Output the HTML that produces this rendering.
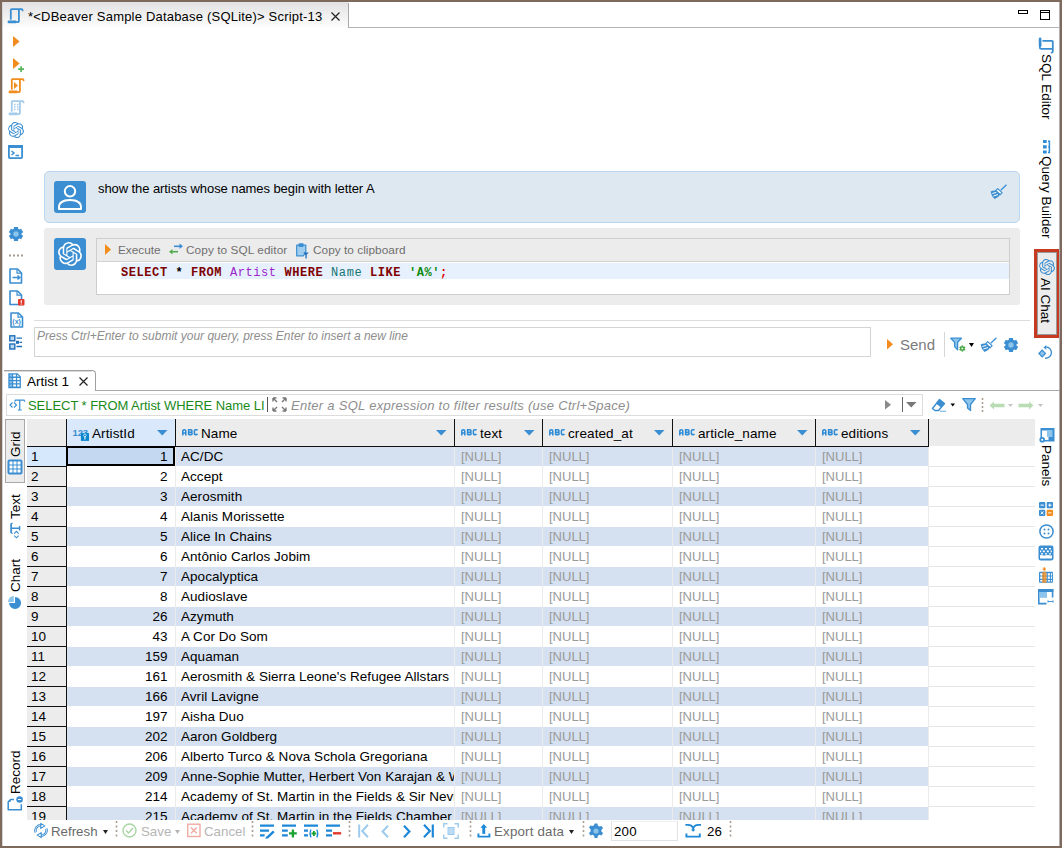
<!DOCTYPE html>
<html><head><meta charset="utf-8">
<style>
*{margin:0;padding:0;box-sizing:border-box}
html,body{width:1062px;height:848px;overflow:hidden;background:#fff;font-family:"Liberation Sans",sans-serif;font-size:13px;color:#000}
.a{position:absolute}
.t{position:absolute;white-space:nowrap;line-height:15px}
svg{position:absolute;overflow:visible}
</style></head><body>

<svg width="0" height="0" style="position:absolute"><defs>
<path id="oai" d="M22.2819 9.8211a5.9847 5.9847 0 0 0-.5157-4.9108 6.0462 6.0462 0 0 0-6.5098-2.9A6.0651 6.0651 0 0 0 4.9807 4.1818a5.9847 5.9847 0 0 0-3.9977 2.9 6.0462 6.0462 0 0 0 .7427 7.0966 5.98 5.98 0 0 0 .511 4.9107 6.051 6.051 0 0 0 6.5146 2.9001A5.9847 5.9847 0 0 0 13.2599 24a6.0557 6.0557 0 0 0 5.7718-4.2058 5.9894 5.9894 0 0 0 3.9977-2.9001 6.0557 6.0557 0 0 0-.7475-7.0729zm-9.022 12.6081a4.4755 4.4755 0 0 1-2.8764-1.0408l.1419-.0804 4.7783-2.7582a.7948.7948 0 0 0 .3927-.6813v-6.7369l2.02 1.1686a.071.071 0 0 1 .038.052v5.5826a4.504 4.504 0 0 1-4.4945 4.4944zm-9.6607-4.1254a4.4708 4.4708 0 0 1-.5346-3.0137l.142.0852 4.783 2.7582a.7712.7712 0 0 0 .7806 0l5.8428-3.3685v2.3324a.0804.0804 0 0 1-.0332.0615L9.74 19.9502a4.4992 4.4992 0 0 1-6.1408-1.6464zM2.3408 7.8956a4.485 4.485 0 0 1 2.3655-1.9728V11.6a.7664.7664 0 0 0 .3879.6765l5.8144 3.3543-2.0201 1.1685a.0757.0757 0 0 1-.071 0l-4.8303-2.7865A4.504 4.504 0 0 1 2.3408 7.872zm16.5963 3.8558L13.1038 8.364 15.1192 7.2a.0757.0757 0 0 1 .071 0l4.8303 2.7913a4.4944 4.4944 0 0 1-.6765 8.1042v-5.6772a.79.79 0 0 0-.407-.667zm2.0107-3.0231l-.142-.0852-4.7735-2.7818a.7759.7759 0 0 0-.7854 0L9.409 9.2297V6.8974a.0662.0662 0 0 1 .0284-.0615l4.8303-2.7866a4.4992 4.4992 0 0 1 6.6802 4.66zM8.3065 12.863l-2.02-1.1638a.0804.0804 0 0 1-.038-.0567V6.0742a4.4992 4.4992 0 0 1 7.3757-3.4537l-.142.0805L8.704 5.459a.7948.7948 0 0 0-.3927.6813zm1.0976-2.3654l2.602-1.4998 2.6069 1.4998v2.9994l-2.5974 1.4997-2.6067-1.4997Z"/>
<g id="scr"><path d="M3.8 11.9V3Q3.8 2.2 4.6 2.2H14.4Q15.6 2.2 15.6 3.4M11.9 2.2V13.4Q11.9 15.2 10.3 15.2Q9 15.2 8.3 14.6" fill="none" stroke-width="1.8" stroke-linecap="round"/><path d="M1.9 14.9H8.3" stroke-width="2.7" stroke-linecap="round"/></g>
</defs></svg>
<!-- ===== editor tab bar ===== -->
<div class="a" style="left:2px;top:2px;width:346px;height:26px;background:linear-gradient(#e2e2e2,#fdfdfd)"></div>
<div class="a" style="left:348px;top:3px;width:1px;height:25px;background:#a9a9a9"></div>
<div class="a" style="left:348px;top:27px;width:711px;height:1px;background:#b4b4b4"></div>
<div class="t" style="left:28px;top:9px;letter-spacing:0.2px">*&lt;DBeaver Sample Database (SQLite)&gt; Script-13</div>
<svg style="left:7px;top:7px" width="18" height="18"><use href="#scr" stroke="#3a8ed1"/></svg>
<svg style="left:331px;top:12px" width="9" height="9"><path d="M0.5 0.5L8.5 8.5M8.5 0.5L0.5 8.5" stroke="#222" stroke-width="1.2"/></svg>
<div class="a" style="left:1018px;top:10px;width:10px;height:4px;border:1px solid #000"></div>
<div class="a" style="left:1040px;top:10px;width:10px;height:10px;border:1px solid #000"></div>
<div class="a" style="left:1041px;top:12px;width:8px;height:1px;background:#000"></div>


<!-- ===== left editor toolbar ===== -->
<svg style="left:13px;top:36px" width="7" height="11"><path d="M0 0L6.6 5.5L0 11Z" fill="#f28c1c"/></svg>
<svg style="left:13px;top:58px" width="12" height="14"><path d="M0 0L6.6 5.5L0 11Z" fill="#f28c1c"/><path d="M5.2 11.1H11M8.1 8.3V13.9" stroke="#58b45a" stroke-width="1.7"/></svg>
<svg style="left:8px;top:77px" width="18" height="18"><use href="#scr" stroke="#f28c1c"/><path d="M6 5L9.9 8.5L6 12Z" fill="#f28c1c"/></svg>
<svg style="left:8px;top:99px" width="18" height="18" opacity="0.45"><use href="#scr" stroke="#3a8ed1"/><path d="M6 5.5H7.5M9 5.5H10.5M6 8H7.5M9 8H10.5M6 10.5H7.5M9 10.5H10.5" stroke="#3a8ed1" stroke-width="1.3"/></svg>
<svg style="left:8px;top:122px" width="16" height="16" viewBox="0 0 24 24"><use href="#oai" fill="#3a8ed1"/></svg>
<svg style="left:8px;top:145px" width="15" height="14"><rect x="0.9" y="0.9" width="13.2" height="12.2" rx="1" fill="none" stroke="#3a8ed1" stroke-width="1.8"/><rect x="0" y="0" width="15" height="3" fill="#3a8ed1"/><path d="M3.5 6L6 8L3.5 10" stroke="#3a8ed1" stroke-width="1.5" fill="none"/><path d="M7.5 10.5H11" stroke="#3a8ed1" stroke-width="1.5"/></svg>
<svg style="left:8px;top:226px" width="16" height="16" viewBox="0 0 16 16"><path d="M5.98 0.88 L10.02 0.88 L10.17 2.84 L11.39 3.54 L13.16 2.69 L15.18 6.19 L13.56 7.30 L13.56 8.70 L15.18 9.81 L13.16 13.31 L11.39 12.46 L10.17 13.16 L10.02 15.12 L5.98 15.12 L5.83 13.16 L4.61 12.46 L2.84 13.31 L0.82 9.81 L2.44 8.70 L2.44 7.30 L0.82 6.19 L2.84 2.69 L4.61 3.54 L5.83 2.84Z" fill="#3a8ed1"/><circle cx="8" cy="8" r="2.7" fill="#8cc4ec"/></svg>
<svg style="left:9px;top:254px" width="15" height="3"><path d="M0 1.5H2M4 1.5H6M8 1.5H10M12 1.5H14" stroke="#a99c8c" stroke-width="2"/></svg>
<svg style="left:9px;top:268px" width="14" height="16"><path d="M1 1H8.5L12.5 5V15H1Z" fill="none" stroke="#3a8ed1" stroke-width="1.6" stroke-linejoin="round"/><path d="M8 1.2V5.2H12" fill="none" stroke="#3a8ed1" stroke-width="1.2"/><path d="M3.5 9.5H10.5M8.5 7.5L10.8 9.5L8.5 11.5" stroke="#3a8ed1" stroke-width="1.5" fill="none"/></svg>
<svg style="left:9px;top:290px" width="16" height="16"><path d="M1 1H8.5L12.5 5V14.5H1Z" fill="none" stroke="#3a8ed1" stroke-width="1.6" stroke-linejoin="round"/><path d="M8 1.2V5.2H12" fill="none" stroke="#3a8ed1" stroke-width="1.2"/><rect x="9" y="9" width="6.5" height="6.5" rx="1" fill="#e03a2c"/><path d="M12.25 10.3V12.8M12.25 13.6V14.4" stroke="#fff" stroke-width="1.2"/></svg>
<svg style="left:10px;top:312px" width="14" height="16"><path d="M1 1H8.5L12.5 5V15H1Z" fill="none" stroke="#3a8ed1" stroke-width="1.6" stroke-linejoin="round"/><path d="M8 1.2V5.2H12" fill="none" stroke="#3a8ed1" stroke-width="1.2"/><text x="6.6" y="12" font-size="7" font-weight="bold" text-anchor="middle" fill="#3a8ed1" font-family="Liberation Sans">(x)</text></svg>
<svg style="left:9px;top:335px" width="14" height="15"><rect x="0.8" y="0.8" width="5" height="5" fill="#bcdaf5" stroke="#1e6fb8" stroke-width="1.4"/><rect x="0.8" y="9" width="5" height="5" fill="#bcdaf5" stroke="#1e6fb8" stroke-width="1.4"/><path d="M7.5 3.2H13M7.5 11.5H13M10.5 7.3H13" stroke="#1e6fb8" stroke-width="1.3"/><rect x="7.5" y="6.3" width="2" height="2" fill="none" stroke="#1e6fb8" stroke-width="1"/></svg>

<!-- ===== chat ===== -->
<div class="a" style="left:44px;top:171px;width:976px;height:52px;background:#dee8f1;border:1px solid #b8d6ef;border-radius:5px"></div>
<div class="a" style="left:54px;top:181px;width:32px;height:32px;background:#3a8ed1;border-radius:3px"></div>
<svg style="left:54px;top:181px" width="32" height="32"><circle cx="16" cy="10.3" r="5.2" fill="none" stroke="#fff" stroke-width="2"/><path d="M5 28V26.5Q5 19 16 19Q27 19 27 26.5V28Z" fill="none" stroke="#fff" stroke-width="2" stroke-linejoin="round"/></svg>
<div class="t" style="left:98px;top:181px;letter-spacing:-0.08px">show the artists whose names begin with letter A</div>
<svg style="left:990px;top:184px" width="17" height="16"><path d="M16.2 1.1L11 5.9" stroke="#3a8ed1" stroke-width="1.3" stroke-linecap="round"/><path d="M7.6 4.6L12.1 8.6L10.3 10.6L5.8 6.6Z" fill="#fff" stroke="#3a8ed1" stroke-width="1.2" stroke-linejoin="round"/><path d="M5.8 6.6Q2.5 6.3 0.6 7.6Q1.4 12.5 4.5 15.1Q8.6 13.6 10.3 10.6Z" fill="#3a8ed1"/><path d="M2.3 9.4L6.3 8.5M3.3 12L8 10.6" stroke="#fff" stroke-width="1"/></svg>

<div class="a" style="left:44px;top:228px;width:976px;height:77px;background:#ececec;border-radius:3px"></div>
<div class="a" style="left:54px;top:238px;width:32px;height:32px;background:#3a8ed1;border-radius:3px"></div>
<svg style="left:58px;top:242px" width="24" height="24" viewBox="0 0 24 24"><use href="#oai" fill="#fff"/></svg>
<div class="a" style="left:96px;top:238px;width:914px;height:57px;background:#fff;border:1px solid #cdcdcd"></div>
<div class="a" style="left:97px;top:239px;width:912px;height:23px;background:#ececec;border-bottom:1px solid #d2d2d2"></div>
<div class="a" style="left:121px;top:263px;width:888px;height:16px;background:#e7f1fd"></div>
<svg style="left:105px;top:244px" width="7" height="11"><path d="M0 0L6 5.5L0 11Z" fill="#f28c1c"/></svg>
<div class="t" style="left:118px;top:243px;font-size:11.8px;color:#6f6f6f;letter-spacing:0px">Execute</div>
<svg style="left:168px;top:243px" width="16" height="12"><path d="M6 3.3H12" stroke="#3a8ed1" stroke-width="1.6"/><path d="M11.5 0.5L15 3.3L11.5 6.1Z" fill="#3a8ed1"/><path d="M4 8.7H10" stroke="#50ad4f" stroke-width="1.6"/><path d="M4.5 5.9L1 8.7L4.5 11.5Z" fill="#50ad4f"/></svg>
<div class="t" style="left:186px;top:243px;font-size:11.8px;color:#6f6f6f;letter-spacing:0.08px">Copy to SQL editor</div>
<svg style="left:296px;top:243px" width="13" height="16"><path d="M0.7 2.2H9.8V8.5L7.5 12.8H0.7Z" fill="#9fcdf0" stroke="#3a8ed1" stroke-width="1.2" stroke-linejoin="round"/><rect x="2.6" y="0.3" width="5" height="3.6" rx="0.8" fill="#3a8ed1"/><path d="M7.3 9.6H12.8L10.05 12.6Z" fill="#1e6fb8"/><path d="M10.05 12V15.5" stroke="#1e6fb8" stroke-width="1.3"/></svg>
<div class="t" style="left:313px;top:243px;font-size:11.8px;color:#6f6f6f;letter-spacing:0.04px">Copy to clipboard</div>
<div class="t" style="left:121px;top:266px;font-family:'Liberation Mono',monospace;font-size:12px;letter-spacing:0.58px;font-weight:bold;color:#7f0000"><span>SELECT</span> <span style="color:#000">*</span> <span>FROM</span> <span style="font-weight:normal;color:#9b27c9">Artist</span> <span>WHERE</span> <span style="font-weight:normal;color:#167575">Name</span> <span>LIKE</span> <span style="color:#0b8a0b">'A%'</span><span style="color:#e00000">;</span></div>

<!-- ===== input ===== -->
<div class="a" style="left:34px;top:320px;width:996px;height:1px;background:#dcdcdc"></div>
<div class="a" style="left:34px;top:327px;width:837px;height:30px;border:1px solid #d4d4d4;background:#fff"></div>
<div class="t" style="left:37px;top:329px;font-size:12px;font-style:italic;color:#8e8e8e;letter-spacing:0px">Press Ctrl+Enter to submit your query, press Enter to insert a new line</div>
<svg style="left:887px;top:339px" width="7" height="11"><path d="M0 0L6 5.25L0 10.5Z" fill="#f28c1c"/></svg>
<div class="t" style="left:900px;top:336px;font-size:15px;line-height:17px;color:#7b7b7b">Send</div>
<div class="a" style="left:944px;top:332px;width:1px;height:25px;background:#d6d6d6"></div>
<svg style="left:950px;top:337px" width="24" height="16"><path d="M0.8 1.2H11.4L7.6 5.3V12.8L4.6 9.6V5.3Z" fill="#8cc4ec" stroke="#3a8ed1" stroke-width="1.3" stroke-linejoin="round"/><path d="M11.43 8.42 L13.17 8.42 L13.19 9.38 L13.69 9.67 L14.53 9.20 L15.40 10.72 L14.58 11.21 L14.58 11.79 L15.40 12.28 L14.53 13.80 L13.69 13.33 L13.19 13.62 L13.17 14.58 L11.43 14.58 L11.41 13.62 L10.91 13.33 L10.07 13.80 L9.20 12.28 L10.02 11.79 L10.02 11.21 L9.20 10.72 L10.07 9.20 L10.91 9.67 L11.41 9.38Z" fill="#3fa33c"/><circle cx="12.3" cy="11.5" r="1" fill="#fff"/><path d="M19 6H24L21.5 10Z" fill="#000"/></svg>
<svg style="left:980px;top:337px" width="17" height="16"><path d="M16.2 1.1L11 5.9" stroke="#3a8ed1" stroke-width="1.3" stroke-linecap="round"/><path d="M7.6 4.6L12.1 8.6L10.3 10.6L5.8 6.6Z" fill="#fff" stroke="#3a8ed1" stroke-width="1.2" stroke-linejoin="round"/><path d="M5.8 6.6Q2.5 6.3 0.6 7.6Q1.4 12.5 4.5 15.1Q8.6 13.6 10.3 10.6Z" fill="#3a8ed1"/><path d="M2.3 9.4L6.3 8.5M3.3 12L8 10.6" stroke="#fff" stroke-width="1"/></svg>
<svg style="left:1003px;top:337px" width="16" height="16" viewBox="0 0 16 16"><path d="M5.98 0.88 L10.02 0.88 L10.17 2.84 L11.39 3.54 L13.16 2.69 L15.18 6.19 L13.56 7.30 L13.56 8.70 L15.18 9.81 L13.16 13.31 L11.39 12.46 L10.17 13.16 L10.02 15.12 L5.98 15.12 L5.83 13.16 L4.61 12.46 L2.84 13.31 L0.82 9.81 L2.44 8.70 L2.44 7.30 L0.82 6.19 L2.84 2.69 L4.61 3.54 L5.83 2.84Z" fill="#3a8ed1"/><circle cx="8" cy="8" r="2.7" fill="#8cc4ec"/></svg>

<!-- ===== results ===== -->
<div class="a" style="left:0;top:419px;width:1059px;height:401px;overflow:hidden">
<div class="a" style="left:27px;top:0;width:1008px;height:27px;background:#ececec"></div>
<div class="a" style="left:67px;top:0;width:108px;height:27px;background:#d9e9fb"></div>
<div class="a" style="left:67px;top:28px;width:861px;height:19px;background:#d5e1f0"></div>
<div class="a" style="left:27px;top:28px;width:39px;height:20px;background:#d6e8fb"></div>
<div class="a" style="left:27px;top:47px;width:39px;height:1px;background:#111"></div>
<div class="a" style="left:928px;top:47px;width:107px;height:1px;background:#e6e6e6"></div>
<div class="a" style="left:67px;top:48px;width:861px;height:19px;background:#ffffff"></div>
<div class="a" style="left:27px;top:48px;width:39px;height:20px;background:#ececec"></div>
<div class="a" style="left:27px;top:67px;width:39px;height:1px;background:#111"></div>
<div class="a" style="left:928px;top:67px;width:107px;height:1px;background:#e6e6e6"></div>
<div class="a" style="left:67px;top:68px;width:861px;height:19px;background:#d5e1f0"></div>
<div class="a" style="left:27px;top:68px;width:39px;height:20px;background:#ececec"></div>
<div class="a" style="left:27px;top:87px;width:39px;height:1px;background:#111"></div>
<div class="a" style="left:928px;top:87px;width:107px;height:1px;background:#e6e6e6"></div>
<div class="a" style="left:67px;top:88px;width:861px;height:19px;background:#ffffff"></div>
<div class="a" style="left:27px;top:88px;width:39px;height:20px;background:#ececec"></div>
<div class="a" style="left:27px;top:107px;width:39px;height:1px;background:#111"></div>
<div class="a" style="left:928px;top:107px;width:107px;height:1px;background:#e6e6e6"></div>
<div class="a" style="left:67px;top:108px;width:861px;height:19px;background:#d5e1f0"></div>
<div class="a" style="left:27px;top:108px;width:39px;height:20px;background:#ececec"></div>
<div class="a" style="left:27px;top:127px;width:39px;height:1px;background:#111"></div>
<div class="a" style="left:928px;top:127px;width:107px;height:1px;background:#e6e6e6"></div>
<div class="a" style="left:67px;top:128px;width:861px;height:19px;background:#ffffff"></div>
<div class="a" style="left:27px;top:128px;width:39px;height:20px;background:#ececec"></div>
<div class="a" style="left:27px;top:147px;width:39px;height:1px;background:#111"></div>
<div class="a" style="left:928px;top:147px;width:107px;height:1px;background:#e6e6e6"></div>
<div class="a" style="left:67px;top:148px;width:861px;height:19px;background:#d5e1f0"></div>
<div class="a" style="left:27px;top:148px;width:39px;height:20px;background:#ececec"></div>
<div class="a" style="left:27px;top:167px;width:39px;height:1px;background:#111"></div>
<div class="a" style="left:928px;top:167px;width:107px;height:1px;background:#e6e6e6"></div>
<div class="a" style="left:67px;top:168px;width:861px;height:19px;background:#ffffff"></div>
<div class="a" style="left:27px;top:168px;width:39px;height:20px;background:#ececec"></div>
<div class="a" style="left:27px;top:187px;width:39px;height:1px;background:#111"></div>
<div class="a" style="left:928px;top:187px;width:107px;height:1px;background:#e6e6e6"></div>
<div class="a" style="left:67px;top:188px;width:861px;height:19px;background:#d5e1f0"></div>
<div class="a" style="left:27px;top:188px;width:39px;height:20px;background:#ececec"></div>
<div class="a" style="left:27px;top:207px;width:39px;height:1px;background:#111"></div>
<div class="a" style="left:928px;top:207px;width:107px;height:1px;background:#e6e6e6"></div>
<div class="a" style="left:67px;top:208px;width:861px;height:19px;background:#ffffff"></div>
<div class="a" style="left:27px;top:208px;width:39px;height:20px;background:#ececec"></div>
<div class="a" style="left:27px;top:227px;width:39px;height:1px;background:#111"></div>
<div class="a" style="left:928px;top:227px;width:107px;height:1px;background:#e6e6e6"></div>
<div class="a" style="left:67px;top:228px;width:861px;height:19px;background:#d5e1f0"></div>
<div class="a" style="left:27px;top:228px;width:39px;height:20px;background:#ececec"></div>
<div class="a" style="left:27px;top:247px;width:39px;height:1px;background:#111"></div>
<div class="a" style="left:928px;top:247px;width:107px;height:1px;background:#e6e6e6"></div>
<div class="a" style="left:67px;top:248px;width:861px;height:19px;background:#ffffff"></div>
<div class="a" style="left:27px;top:248px;width:39px;height:20px;background:#ececec"></div>
<div class="a" style="left:27px;top:267px;width:39px;height:1px;background:#111"></div>
<div class="a" style="left:928px;top:267px;width:107px;height:1px;background:#e6e6e6"></div>
<div class="a" style="left:67px;top:268px;width:861px;height:19px;background:#d5e1f0"></div>
<div class="a" style="left:27px;top:268px;width:39px;height:20px;background:#ececec"></div>
<div class="a" style="left:27px;top:287px;width:39px;height:1px;background:#111"></div>
<div class="a" style="left:928px;top:287px;width:107px;height:1px;background:#e6e6e6"></div>
<div class="a" style="left:67px;top:288px;width:861px;height:19px;background:#ffffff"></div>
<div class="a" style="left:27px;top:288px;width:39px;height:20px;background:#ececec"></div>
<div class="a" style="left:27px;top:307px;width:39px;height:1px;background:#111"></div>
<div class="a" style="left:928px;top:307px;width:107px;height:1px;background:#e6e6e6"></div>
<div class="a" style="left:67px;top:308px;width:861px;height:19px;background:#d5e1f0"></div>
<div class="a" style="left:27px;top:308px;width:39px;height:20px;background:#ececec"></div>
<div class="a" style="left:27px;top:327px;width:39px;height:1px;background:#111"></div>
<div class="a" style="left:928px;top:327px;width:107px;height:1px;background:#e6e6e6"></div>
<div class="a" style="left:67px;top:328px;width:861px;height:19px;background:#ffffff"></div>
<div class="a" style="left:27px;top:328px;width:39px;height:20px;background:#ececec"></div>
<div class="a" style="left:27px;top:347px;width:39px;height:1px;background:#111"></div>
<div class="a" style="left:928px;top:347px;width:107px;height:1px;background:#e6e6e6"></div>
<div class="a" style="left:67px;top:348px;width:861px;height:19px;background:#d5e1f0"></div>
<div class="a" style="left:27px;top:348px;width:39px;height:20px;background:#ececec"></div>
<div class="a" style="left:27px;top:367px;width:39px;height:1px;background:#111"></div>
<div class="a" style="left:928px;top:367px;width:107px;height:1px;background:#e6e6e6"></div>
<div class="a" style="left:67px;top:368px;width:861px;height:19px;background:#ffffff"></div>
<div class="a" style="left:27px;top:368px;width:39px;height:20px;background:#ececec"></div>
<div class="a" style="left:27px;top:387px;width:39px;height:1px;background:#111"></div>
<div class="a" style="left:928px;top:387px;width:107px;height:1px;background:#e6e6e6"></div>
<div class="a" style="left:67px;top:388px;width:861px;height:19px;background:#d5e1f0"></div>
<div class="a" style="left:27px;top:388px;width:39px;height:20px;background:#ececec"></div>
<div class="a" style="left:27px;top:407px;width:39px;height:1px;background:#111"></div>
<div class="a" style="left:928px;top:407px;width:107px;height:1px;background:#e6e6e6"></div>
<div class="a" style="left:175px;top:28px;width:1px;height:380px;background:#ebebeb"></div>
<div class="a" style="left:454px;top:28px;width:1px;height:380px;background:#ebebeb"></div>
<div class="a" style="left:542px;top:28px;width:1px;height:380px;background:#ebebeb"></div>
<div class="a" style="left:672px;top:28px;width:1px;height:380px;background:#ebebeb"></div>
<div class="a" style="left:815px;top:28px;width:1px;height:380px;background:#ebebeb"></div>
<div class="a" style="left:928px;top:28px;width:1px;height:380px;background:#ebebeb"></div>
<div class="a" style="left:66px;top:0;width:1px;height:28px;background:#111"></div>
<div class="a" style="left:175px;top:0;width:1px;height:28px;background:#111"></div>
<div class="a" style="left:454px;top:0;width:1px;height:28px;background:#111"></div>
<div class="a" style="left:542px;top:0;width:1px;height:28px;background:#111"></div>
<div class="a" style="left:672px;top:0;width:1px;height:28px;background:#111"></div>
<div class="a" style="left:815px;top:0;width:1px;height:28px;background:#111"></div>
<div class="a" style="left:928px;top:0;width:1px;height:28px;background:#111"></div>
<div class="a" style="left:27px;top:27px;width:902px;height:1px;background:#111"></div>
<div class="a" style="left:66px;top:0;width:1px;height:401px;background:#111"></div>
<div class="a" style="left:66px;top:27px;width:109px;height:20px;border:2px solid #000;background:#c4d9f1"></div>
<div class="t" style="left:31px;top:30px;font-size:13.5px">1</div>
<div class="t" style="left:100px;width:67.5px;text-align:right;top:30px;font-size:13.5px">1</div>
<div class="t" style="left:181px;width:273px;overflow:hidden;top:30px;font-size:13.5px;letter-spacing:0.05px">AC/DC</div>
<div class="t" style="left:461px;top:30px;font-size:13px;color:#9a9a9a">[NULL]</div>
<div class="t" style="left:549px;top:30px;font-size:13px;color:#9a9a9a">[NULL]</div>
<div class="t" style="left:679px;top:30px;font-size:13px;color:#9a9a9a">[NULL]</div>
<div class="t" style="left:822px;top:30px;font-size:13px;color:#9a9a9a">[NULL]</div>
<div class="t" style="left:31px;top:50px;font-size:13.5px">2</div>
<div class="t" style="left:100px;width:67.5px;text-align:right;top:50px;font-size:13.5px">2</div>
<div class="t" style="left:181px;width:273px;overflow:hidden;top:50px;font-size:13.5px;letter-spacing:0.05px">Accept</div>
<div class="t" style="left:461px;top:50px;font-size:13px;color:#9a9a9a">[NULL]</div>
<div class="t" style="left:549px;top:50px;font-size:13px;color:#9a9a9a">[NULL]</div>
<div class="t" style="left:679px;top:50px;font-size:13px;color:#9a9a9a">[NULL]</div>
<div class="t" style="left:822px;top:50px;font-size:13px;color:#9a9a9a">[NULL]</div>
<div class="t" style="left:31px;top:70px;font-size:13.5px">3</div>
<div class="t" style="left:100px;width:67.5px;text-align:right;top:70px;font-size:13.5px">3</div>
<div class="t" style="left:181px;width:273px;overflow:hidden;top:70px;font-size:13.5px;letter-spacing:0.05px">Aerosmith</div>
<div class="t" style="left:461px;top:70px;font-size:13px;color:#9a9a9a">[NULL]</div>
<div class="t" style="left:549px;top:70px;font-size:13px;color:#9a9a9a">[NULL]</div>
<div class="t" style="left:679px;top:70px;font-size:13px;color:#9a9a9a">[NULL]</div>
<div class="t" style="left:822px;top:70px;font-size:13px;color:#9a9a9a">[NULL]</div>
<div class="t" style="left:31px;top:90px;font-size:13.5px">4</div>
<div class="t" style="left:100px;width:67.5px;text-align:right;top:90px;font-size:13.5px">4</div>
<div class="t" style="left:181px;width:273px;overflow:hidden;top:90px;font-size:13.5px;letter-spacing:0.05px">Alanis Morissette</div>
<div class="t" style="left:461px;top:90px;font-size:13px;color:#9a9a9a">[NULL]</div>
<div class="t" style="left:549px;top:90px;font-size:13px;color:#9a9a9a">[NULL]</div>
<div class="t" style="left:679px;top:90px;font-size:13px;color:#9a9a9a">[NULL]</div>
<div class="t" style="left:822px;top:90px;font-size:13px;color:#9a9a9a">[NULL]</div>
<div class="t" style="left:31px;top:110px;font-size:13.5px">5</div>
<div class="t" style="left:100px;width:67.5px;text-align:right;top:110px;font-size:13.5px">5</div>
<div class="t" style="left:181px;width:273px;overflow:hidden;top:110px;font-size:13.5px;letter-spacing:0.05px">Alice In Chains</div>
<div class="t" style="left:461px;top:110px;font-size:13px;color:#9a9a9a">[NULL]</div>
<div class="t" style="left:549px;top:110px;font-size:13px;color:#9a9a9a">[NULL]</div>
<div class="t" style="left:679px;top:110px;font-size:13px;color:#9a9a9a">[NULL]</div>
<div class="t" style="left:822px;top:110px;font-size:13px;color:#9a9a9a">[NULL]</div>
<div class="t" style="left:31px;top:130px;font-size:13.5px">6</div>
<div class="t" style="left:100px;width:67.5px;text-align:right;top:130px;font-size:13.5px">6</div>
<div class="t" style="left:181px;width:273px;overflow:hidden;top:130px;font-size:13.5px;letter-spacing:0.05px">Antônio Carlos Jobim</div>
<div class="t" style="left:461px;top:130px;font-size:13px;color:#9a9a9a">[NULL]</div>
<div class="t" style="left:549px;top:130px;font-size:13px;color:#9a9a9a">[NULL]</div>
<div class="t" style="left:679px;top:130px;font-size:13px;color:#9a9a9a">[NULL]</div>
<div class="t" style="left:822px;top:130px;font-size:13px;color:#9a9a9a">[NULL]</div>
<div class="t" style="left:31px;top:150px;font-size:13.5px">7</div>
<div class="t" style="left:100px;width:67.5px;text-align:right;top:150px;font-size:13.5px">7</div>
<div class="t" style="left:181px;width:273px;overflow:hidden;top:150px;font-size:13.5px;letter-spacing:0.05px">Apocalyptica</div>
<div class="t" style="left:461px;top:150px;font-size:13px;color:#9a9a9a">[NULL]</div>
<div class="t" style="left:549px;top:150px;font-size:13px;color:#9a9a9a">[NULL]</div>
<div class="t" style="left:679px;top:150px;font-size:13px;color:#9a9a9a">[NULL]</div>
<div class="t" style="left:822px;top:150px;font-size:13px;color:#9a9a9a">[NULL]</div>
<div class="t" style="left:31px;top:170px;font-size:13.5px">8</div>
<div class="t" style="left:100px;width:67.5px;text-align:right;top:170px;font-size:13.5px">8</div>
<div class="t" style="left:181px;width:273px;overflow:hidden;top:170px;font-size:13.5px;letter-spacing:0.05px">Audioslave</div>
<div class="t" style="left:461px;top:170px;font-size:13px;color:#9a9a9a">[NULL]</div>
<div class="t" style="left:549px;top:170px;font-size:13px;color:#9a9a9a">[NULL]</div>
<div class="t" style="left:679px;top:170px;font-size:13px;color:#9a9a9a">[NULL]</div>
<div class="t" style="left:822px;top:170px;font-size:13px;color:#9a9a9a">[NULL]</div>
<div class="t" style="left:31px;top:190px;font-size:13.5px">9</div>
<div class="t" style="left:100px;width:67.5px;text-align:right;top:190px;font-size:13.5px">26</div>
<div class="t" style="left:181px;width:273px;overflow:hidden;top:190px;font-size:13.5px;letter-spacing:0.05px">Azymuth</div>
<div class="t" style="left:461px;top:190px;font-size:13px;color:#9a9a9a">[NULL]</div>
<div class="t" style="left:549px;top:190px;font-size:13px;color:#9a9a9a">[NULL]</div>
<div class="t" style="left:679px;top:190px;font-size:13px;color:#9a9a9a">[NULL]</div>
<div class="t" style="left:822px;top:190px;font-size:13px;color:#9a9a9a">[NULL]</div>
<div class="t" style="left:31px;top:210px;font-size:13.5px">10</div>
<div class="t" style="left:100px;width:67.5px;text-align:right;top:210px;font-size:13.5px">43</div>
<div class="t" style="left:181px;width:273px;overflow:hidden;top:210px;font-size:13.5px;letter-spacing:0.05px">A Cor Do Som</div>
<div class="t" style="left:461px;top:210px;font-size:13px;color:#9a9a9a">[NULL]</div>
<div class="t" style="left:549px;top:210px;font-size:13px;color:#9a9a9a">[NULL]</div>
<div class="t" style="left:679px;top:210px;font-size:13px;color:#9a9a9a">[NULL]</div>
<div class="t" style="left:822px;top:210px;font-size:13px;color:#9a9a9a">[NULL]</div>
<div class="t" style="left:31px;top:230px;font-size:13.5px">11</div>
<div class="t" style="left:100px;width:67.5px;text-align:right;top:230px;font-size:13.5px">159</div>
<div class="t" style="left:181px;width:273px;overflow:hidden;top:230px;font-size:13.5px;letter-spacing:0.05px">Aquaman</div>
<div class="t" style="left:461px;top:230px;font-size:13px;color:#9a9a9a">[NULL]</div>
<div class="t" style="left:549px;top:230px;font-size:13px;color:#9a9a9a">[NULL]</div>
<div class="t" style="left:679px;top:230px;font-size:13px;color:#9a9a9a">[NULL]</div>
<div class="t" style="left:822px;top:230px;font-size:13px;color:#9a9a9a">[NULL]</div>
<div class="t" style="left:31px;top:250px;font-size:13.5px">12</div>
<div class="t" style="left:100px;width:67.5px;text-align:right;top:250px;font-size:13.5px">161</div>
<div class="t" style="left:181px;width:273px;overflow:hidden;top:250px;font-size:13.5px;letter-spacing:0.05px">Aerosmith &amp; Sierra Leone's Refugee Allstars</div>
<div class="t" style="left:461px;top:250px;font-size:13px;color:#9a9a9a">[NULL]</div>
<div class="t" style="left:549px;top:250px;font-size:13px;color:#9a9a9a">[NULL]</div>
<div class="t" style="left:679px;top:250px;font-size:13px;color:#9a9a9a">[NULL]</div>
<div class="t" style="left:822px;top:250px;font-size:13px;color:#9a9a9a">[NULL]</div>
<div class="t" style="left:31px;top:270px;font-size:13.5px">13</div>
<div class="t" style="left:100px;width:67.5px;text-align:right;top:270px;font-size:13.5px">166</div>
<div class="t" style="left:181px;width:273px;overflow:hidden;top:270px;font-size:13.5px;letter-spacing:0.05px">Avril Lavigne</div>
<div class="t" style="left:461px;top:270px;font-size:13px;color:#9a9a9a">[NULL]</div>
<div class="t" style="left:549px;top:270px;font-size:13px;color:#9a9a9a">[NULL]</div>
<div class="t" style="left:679px;top:270px;font-size:13px;color:#9a9a9a">[NULL]</div>
<div class="t" style="left:822px;top:270px;font-size:13px;color:#9a9a9a">[NULL]</div>
<div class="t" style="left:31px;top:290px;font-size:13.5px">14</div>
<div class="t" style="left:100px;width:67.5px;text-align:right;top:290px;font-size:13.5px">197</div>
<div class="t" style="left:181px;width:273px;overflow:hidden;top:290px;font-size:13.5px;letter-spacing:0.05px">Aisha Duo</div>
<div class="t" style="left:461px;top:290px;font-size:13px;color:#9a9a9a">[NULL]</div>
<div class="t" style="left:549px;top:290px;font-size:13px;color:#9a9a9a">[NULL]</div>
<div class="t" style="left:679px;top:290px;font-size:13px;color:#9a9a9a">[NULL]</div>
<div class="t" style="left:822px;top:290px;font-size:13px;color:#9a9a9a">[NULL]</div>
<div class="t" style="left:31px;top:310px;font-size:13.5px">15</div>
<div class="t" style="left:100px;width:67.5px;text-align:right;top:310px;font-size:13.5px">202</div>
<div class="t" style="left:181px;width:273px;overflow:hidden;top:310px;font-size:13.5px;letter-spacing:0.05px">Aaron Goldberg</div>
<div class="t" style="left:461px;top:310px;font-size:13px;color:#9a9a9a">[NULL]</div>
<div class="t" style="left:549px;top:310px;font-size:13px;color:#9a9a9a">[NULL]</div>
<div class="t" style="left:679px;top:310px;font-size:13px;color:#9a9a9a">[NULL]</div>
<div class="t" style="left:822px;top:310px;font-size:13px;color:#9a9a9a">[NULL]</div>
<div class="t" style="left:31px;top:330px;font-size:13.5px">16</div>
<div class="t" style="left:100px;width:67.5px;text-align:right;top:330px;font-size:13.5px">206</div>
<div class="t" style="left:181px;width:273px;overflow:hidden;top:330px;font-size:13.5px;letter-spacing:0.05px">Alberto Turco &amp; Nova Schola Gregoriana</div>
<div class="t" style="left:461px;top:330px;font-size:13px;color:#9a9a9a">[NULL]</div>
<div class="t" style="left:549px;top:330px;font-size:13px;color:#9a9a9a">[NULL]</div>
<div class="t" style="left:679px;top:330px;font-size:13px;color:#9a9a9a">[NULL]</div>
<div class="t" style="left:822px;top:330px;font-size:13px;color:#9a9a9a">[NULL]</div>
<div class="t" style="left:31px;top:350px;font-size:13.5px">17</div>
<div class="t" style="left:100px;width:67.5px;text-align:right;top:350px;font-size:13.5px">209</div>
<div class="t" style="left:181px;width:273px;overflow:hidden;top:350px;font-size:13.5px;letter-spacing:0.05px">Anne-Sophie Mutter, Herbert Von Karajan &amp; Wiener Philharmoniker</div>
<div class="t" style="left:461px;top:350px;font-size:13px;color:#9a9a9a">[NULL]</div>
<div class="t" style="left:549px;top:350px;font-size:13px;color:#9a9a9a">[NULL]</div>
<div class="t" style="left:679px;top:350px;font-size:13px;color:#9a9a9a">[NULL]</div>
<div class="t" style="left:822px;top:350px;font-size:13px;color:#9a9a9a">[NULL]</div>
<div class="t" style="left:31px;top:370px;font-size:13.5px">18</div>
<div class="t" style="left:100px;width:67.5px;text-align:right;top:370px;font-size:13.5px">214</div>
<div class="t" style="left:181px;width:273px;overflow:hidden;top:370px;font-size:13.5px;letter-spacing:0.05px">Academy of St. Martin in the Fields &amp; Sir Neville Marriner</div>
<div class="t" style="left:461px;top:370px;font-size:13px;color:#9a9a9a">[NULL]</div>
<div class="t" style="left:549px;top:370px;font-size:13px;color:#9a9a9a">[NULL]</div>
<div class="t" style="left:679px;top:370px;font-size:13px;color:#9a9a9a">[NULL]</div>
<div class="t" style="left:822px;top:370px;font-size:13px;color:#9a9a9a">[NULL]</div>
<div class="t" style="left:31px;top:390px;font-size:13.5px">19</div>
<div class="t" style="left:100px;width:67.5px;text-align:right;top:390px;font-size:13.5px">215</div>
<div class="t" style="left:181px;width:273px;overflow:hidden;top:390px;font-size:13.5px;letter-spacing:0.05px">Academy of St. Martin in the Fields Chamber Ensemble &amp; Sir Neville Marriner</div>
<div class="t" style="left:461px;top:390px;font-size:13px;color:#9a9a9a">[NULL]</div>
<div class="t" style="left:549px;top:390px;font-size:13px;color:#9a9a9a">[NULL]</div>
<div class="t" style="left:679px;top:390px;font-size:13px;color:#9a9a9a">[NULL]</div>
<div class="t" style="left:822px;top:390px;font-size:13px;color:#9a9a9a">[NULL]</div>
</div>
<!-- ===== rest ===== -->
<div class="a" style="left:95px;top:390px;width:964px;height:1px;background:#a8a8a8"></div>
<div class="a" style="left:4px;top:370px;width:92px;height:21px;background:#fff;border:1px solid #a0a0a0;border-left:none;border-bottom:none;border-top-right-radius:4px"></div>
<div class="a" style="left:4px;top:371px;width:88px;height:1px;background:#dadada"></div>
<svg style="left:8px;top:373px" width="14" height="16"><path d="M0.3 0.3H9.6L12.9 3.6V15.2H0.3Z" fill="#3a8ed1"/><path d="M1.6 1.6H3.9V3.6H1.6ZM1.6 4.9H3.9V6.9H1.6ZM1.6 8.2H3.9V10.2H1.6ZM1.6 11.5H3.9V13.5H1.6Z" fill="#8cc4ec"/><path d="M5.2 1.6H7.9V3.6H5.2ZM5.2 4.9H7.9V6.9H5.2ZM5.2 8.2H7.9V10.2H5.2ZM5.2 11.5H7.9V13.5H5.2ZM9.2 4.9H11.6V6.9H9.2ZM9.2 8.2H11.6V10.2H9.2ZM9.2 11.5H11.6V13.5H9.2Z" fill="#fff"/><path d="M9.2 1.6V3.6H11.3Z" fill="#fff"/></svg>
<div class="t" style="left:27px;top:374px;font-size:13.5px">Artist 1</div>
<svg style="left:79px;top:377px" width="9" height="9"><path d="M0.5 0.5L8.5 8.5M8.5 0.5L0.5 8.5" stroke="#222" stroke-width="1.2"/></svg>
<div class="a" style="left:6px;top:394px;width:917px;height:22px;border:1px solid #dcdcdc;background:#fff"></div>
<svg style="left:9px;top:399px" width="16" height="12"><path d="M3.5 3.5L1 6L3.5 8.5M5 3.5L7.5 6L5 8.5" stroke="#3a8ed1" stroke-width="1.1" fill="none"/><path d="M6 1.2H15.5M6 1.2V2.8M15.5 1.2V2.8M10.75 1.2V11M8.8 11H12.7" stroke="#3a8ed1" stroke-width="1.2" fill="none"/></svg>
<div class="t" style="left:28px;top:398px;font-size:13px;color:#1a8a1a;letter-spacing:-0.05px">SELECT * FROM Artist WHERE Name LI</div>
<div class="a" style="left:267px;top:397px;width:1px;height:15px;background:#555"></div>
<svg style="left:272px;top:397px" width="15" height="15"><path d="M1 1L5 5M1 1H4.5M1 1V4.5M14 1L10 5M14 1H10.5M14 1V4.5M1 14L5 10M1 14H4.5M1 14V10.5M14 14L10 10M14 14H10.5M14 14V10.5" stroke="#777" stroke-width="1.4" fill="none"/></svg>
<div class="t" style="left:291px;top:398px;font-size:13px;font-style:italic;color:#8e8e8e;letter-spacing:0.27px">Enter a SQL expression to filter results (use Ctrl+Space)</div>
<svg style="left:885px;top:400px" width="7" height="10"><path d="M0 0L6 4.75L0 9.5Z" fill="#8a8a8a"/></svg>
<div class="a" style="left:902px;top:397px;width:1px;height:15px;background:#666"></div>
<svg style="left:906px;top:402px" width="11" height="6"><path d="M0 0H10.5L5.25 5.5Z" fill="#777"/></svg>
<svg style="left:931px;top:398px" width="25" height="15"><path d="M8.5 1.5L13.5 5.5L7.5 12.5H4L1.5 10.5Z" fill="#fff" stroke="#3a8ed1" stroke-width="1.4" stroke-linejoin="round"/><path d="M8.5 1.5L13.5 5.5L10 9.5L5 5.5Z" fill="#3a8ed1"/><path d="M9 13.3H15" stroke="#8cc4ec" stroke-width="1.4"/><path d="M19.5 5.5H24L21.75 8.5Z" fill="#000"/></svg>
<svg style="left:962px;top:398px" width="14" height="13"><path d="M0.7 0.7H13.3L8.5 6.5V12.5L5.5 10V6.5Z" fill="#8cc4ec" stroke="#3a8ed1" stroke-width="1.3" stroke-linejoin="round"/></svg>
<svg style="left:981px;top:398px" width="3" height="16"><path d="M1.5 0V16" stroke="#a99c8c" stroke-width="1.5" stroke-dasharray="2 2"/></svg>
<svg style="left:989px;top:401px" width="25" height="9"><path d="M0.5 4.5L5 0.5V2.8H15.5V6.2H5V8.5Z" fill="#b9dcb3"/><path d="M19 3H24L21.5 6Z" fill="#c4c4c4"/></svg>
<svg style="left:1018px;top:401px" width="26" height="9"><path d="M15.5 4.5L11 0.5V2.8H0.5V6.2H11V8.5Z" fill="#b9dcb3"/><path d="M20 3H25L22.5 6Z" fill="#c4c4c4"/></svg>
<svg style="left:72px;top:428px" width="18" height="14"><text x="0.5" y="7.6" font-family="Liberation Sans" font-weight="bold" font-size="9.6" fill="#3a8ed1" letter-spacing="-0.2">123</text><rect x="8.9" y="5.1" width="8.1" height="7.8" fill="#0a86cf"/><circle cx="12.9" cy="7.4" r="1.3" fill="none" stroke="#cfe8f8" stroke-width="0.9"/><path d="M12.9 8.8V11.6" stroke="#fff" stroke-width="1.1"/></svg>
<div class="t" style="left:92px;top:426px;font-size:13.5px;letter-spacing:0.1px">ArtistId</div>
<svg style="left:157px;top:430px" width="11" height="6"><path d="M0 0H10.5L5.25 5.5Z" fill="#3a8ed1"/></svg>
<svg style="left:182px;top:429px" width="17" height="7"><path d="M0.8 6.4V2.2Q0.8 0.8 2.3 0.8Q3.8 0.8 3.8 2.2V6.4M0.8 4H3.8M6.6 6V0.8H8.9Q10 0.8 10 1.9Q10 3.3 8.9 3.3H6.6M6.6 3.3H9Q10.1 3.3 10.1 4.5Q10.1 5.6 9 5.6H6.6M15.6 1.3Q15.2 0.8 14.2 0.8H13.5Q12.4 0.8 12.4 2V4.4Q12.4 5.6 13.5 5.6H14.2Q15.2 5.6 15.6 5.1" fill="none" stroke="#2e8bd6" stroke-width="1.55"/></svg>
<div class="t" style="left:201px;top:426px;font-size:13.5px;letter-spacing:0.1px">Name</div>
<svg style="left:436px;top:430px" width="11" height="6"><path d="M0 0H10.5L5.25 5.5Z" fill="#3a8ed1"/></svg>
<svg style="left:461px;top:429px" width="17" height="7"><path d="M0.8 6.4V2.2Q0.8 0.8 2.3 0.8Q3.8 0.8 3.8 2.2V6.4M0.8 4H3.8M6.6 6V0.8H8.9Q10 0.8 10 1.9Q10 3.3 8.9 3.3H6.6M6.6 3.3H9Q10.1 3.3 10.1 4.5Q10.1 5.6 9 5.6H6.6M15.6 1.3Q15.2 0.8 14.2 0.8H13.5Q12.4 0.8 12.4 2V4.4Q12.4 5.6 13.5 5.6H14.2Q15.2 5.6 15.6 5.1" fill="none" stroke="#2e8bd6" stroke-width="1.55"/></svg>
<div class="t" style="left:480px;top:426px;font-size:13.5px;letter-spacing:0.1px">text</div>
<svg style="left:524px;top:430px" width="11" height="6"><path d="M0 0H10.5L5.25 5.5Z" fill="#3a8ed1"/></svg>
<svg style="left:549px;top:429px" width="17" height="7"><path d="M0.8 6.4V2.2Q0.8 0.8 2.3 0.8Q3.8 0.8 3.8 2.2V6.4M0.8 4H3.8M6.6 6V0.8H8.9Q10 0.8 10 1.9Q10 3.3 8.9 3.3H6.6M6.6 3.3H9Q10.1 3.3 10.1 4.5Q10.1 5.6 9 5.6H6.6M15.6 1.3Q15.2 0.8 14.2 0.8H13.5Q12.4 0.8 12.4 2V4.4Q12.4 5.6 13.5 5.6H14.2Q15.2 5.6 15.6 5.1" fill="none" stroke="#2e8bd6" stroke-width="1.55"/></svg>
<div class="t" style="left:568px;top:426px;font-size:13.5px;letter-spacing:0.1px">created_at</div>
<svg style="left:654px;top:430px" width="11" height="6"><path d="M0 0H10.5L5.25 5.5Z" fill="#3a8ed1"/></svg>
<svg style="left:679px;top:429px" width="17" height="7"><path d="M0.8 6.4V2.2Q0.8 0.8 2.3 0.8Q3.8 0.8 3.8 2.2V6.4M0.8 4H3.8M6.6 6V0.8H8.9Q10 0.8 10 1.9Q10 3.3 8.9 3.3H6.6M6.6 3.3H9Q10.1 3.3 10.1 4.5Q10.1 5.6 9 5.6H6.6M15.6 1.3Q15.2 0.8 14.2 0.8H13.5Q12.4 0.8 12.4 2V4.4Q12.4 5.6 13.5 5.6H14.2Q15.2 5.6 15.6 5.1" fill="none" stroke="#2e8bd6" stroke-width="1.55"/></svg>
<div class="t" style="left:698px;top:426px;font-size:13.5px;letter-spacing:0.1px">article_name</div>
<svg style="left:797px;top:430px" width="11" height="6"><path d="M0 0H10.5L5.25 5.5Z" fill="#3a8ed1"/></svg>
<svg style="left:822px;top:429px" width="17" height="7"><path d="M0.8 6.4V2.2Q0.8 0.8 2.3 0.8Q3.8 0.8 3.8 2.2V6.4M0.8 4H3.8M6.6 6V0.8H8.9Q10 0.8 10 1.9Q10 3.3 8.9 3.3H6.6M6.6 3.3H9Q10.1 3.3 10.1 4.5Q10.1 5.6 9 5.6H6.6M15.6 1.3Q15.2 0.8 14.2 0.8H13.5Q12.4 0.8 12.4 2V4.4Q12.4 5.6 13.5 5.6H14.2Q15.2 5.6 15.6 5.1" fill="none" stroke="#2e8bd6" stroke-width="1.55"/></svg>
<div class="t" style="left:841px;top:426px;font-size:13.5px;letter-spacing:0.1px">editions</div>
<svg style="left:910px;top:430px" width="11" height="6"><path d="M0 0H10.5L5.25 5.5Z" fill="#3a8ed1"/></svg>
<div class="a" style="left:5px;top:419px;width:20px;height:64px;background:#ececec;border:1px solid #a8a8a8"></div>
<div class="t" style="left:8px;top:457px;font-size:13.5px;transform-origin:0 0;transform:rotate(-90deg)">Grid</div>
<svg style="left:7px;top:459px" width="16" height="16"><rect x="0.5" y="0.5" width="15" height="15" rx="2" fill="#3a8ed1"/><path d="M2.5 2.5h3v3h-3zM6.5 2.5h3v3h-3zM10.5 2.5h3v3h-3zM2.5 6.5h3v3h-3zM6.5 6.5h3v3h-3zM10.5 6.5h3v3h-3zM2.5 10.5h3v3h-3zM6.5 10.5h3v3h-3zM10.5 10.5h3v3h-3z" fill="#fff"/></svg>
<div class="t" style="left:8px;top:519px;font-size:13.5px;transform-origin:0 0;transform:rotate(-90deg)">Text</div>
<svg style="left:8px;top:520px" width="14" height="20"><path d="M3.1 3.6V12.9" stroke="#3a8ed1" stroke-width="1.7"/><path d="M3.1 3.8L4.6 2.9M3.1 12.7L4.6 13.6" stroke="#3a8ed1" stroke-width="1.2"/><path d="M3.1 8.2H11.6M11.6 6V10.4" stroke="#3a8ed1" stroke-width="1.4"/><path d="M6.2 13.6L8.4 11.4L10.6 13.6M6.2 15.6L8.4 17.8L10.6 15.6" fill="none" stroke="#3a8ed1" stroke-width="1.1"/></svg>
<div class="t" style="left:8px;top:592px;font-size:13.5px;transform-origin:0 0;transform:rotate(-90deg)">Chart</div>
<svg style="left:8px;top:592px" width="14" height="18"><path d="M7.05 5A6 6 0 1 1 1.05 11H7.05Z" fill="#3a8ed1"/><path d="M5.8 4.1A5.8 5.8 0 0 0 0 9.9H5.8Z" fill="#8cc4ec"/></svg>
<div class="t" style="left:8px;top:794px;font-size:13.5px;transform-origin:0 0;transform:rotate(-90deg)">Record</div>
<svg style="left:7px;top:796px" width="17" height="15"><path d="M7 3.5H3.6L1.2 5.9V13.8H14.3V8.3" fill="none" stroke="#3a8ed1" stroke-width="1.5" stroke-linejoin="round"/><path d="M1.5 5.9L3.6 3.7V5.9Z" fill="#3a8ed1"/><circle cx="12.6" cy="3.5" r="3.3" fill="#3a8ed1"/><path d="M11 3.5H14.2" stroke="#fff" stroke-width="1"/></svg>
<svg style="left:1039px;top:37px" width="16" height="16" style="transform:rotate(90deg)"><g transform="rotate(90 8 8)"><use href="#scr" stroke="#3a8ed1" stroke-width="1.8" fill="none"/></g></svg>
<div class="t" style="left:1054px;top:54px;font-size:13.5px;transform-origin:0 0;transform:rotate(90deg)">SQL Editor</div>
<svg style="left:1043px;top:139px" width="8" height="16"><path d="M0 0.9H3.7V3.9H0ZM0 6.3H3.7V9.4H0ZM0 11.5H3.7V14.6H0Z" fill="#2e8bd6"/><path d="M5 2.2H6.4V13.6H5M5.2 8H6.4" fill="none" stroke="#2e8bd6" stroke-width="1.5"/></svg>
<div class="t" style="left:1054px;top:156px;font-size:13.5px;transform-origin:0 0;transform:rotate(90deg)">Query Builder</div>
<div class="a" style="left:1034px;top:249px;width:26px;height:89px;border:3px solid #c63a22;background:#ececec"></div>
<div class="a" style="left:1037px;top:252px;width:20px;height:83px;border:1px solid #9a9a9a"></div>
<svg style="left:1039px;top:259px" width="16" height="16" viewBox="0 0 24 24"><use href="#oai" fill="#3a8ed1"/></svg>
<div class="t" style="left:1053px;top:278px;font-size:13.5px;transform-origin:0 0;transform:rotate(90deg)">AI Chat</div>
<svg style="left:1038px;top:344px" width="16" height="16"><path d="M8.5 3A5.6 5.6 0 1 1 7 14.2" fill="none" stroke="#3a8ed1" stroke-width="1.3"/><path d="M8.4 0.9V5.8L5.4 3.4Z" fill="#3a8ed1"/><path d="M0.9 9.5L4.2 6.2L7.5 9.5L4.2 12.8Z" fill="#8cc4ec" stroke="#3a8ed1" stroke-width="1.2"/></svg>
<svg style="left:1039px;top:427px" width="16" height="16"><rect x="1.5" y="1" width="14" height="13.5" fill="#3a8ed1"/><rect x="3" y="3.5" width="6.5" height="9.5" fill="#fff"/><rect x="8" y="3" width="5.5" height="7" fill="#8cc4ec"/><circle cx="3.2" cy="12.8" r="2.8" fill="#3a8ed1"/><circle cx="3.2" cy="12.8" r="1" fill="#fff"/></svg>
<div class="t" style="left:1054px;top:445px;font-size:13.5px;transform-origin:0 0;transform:rotate(90deg)">Panels</div>
<svg style="left:1039px;top:502px" width="14" height="14"><rect x="0" y="0" width="6.3" height="6.3" rx="1" fill="#3a8ed1"/><rect x="7.7" y="0" width="6.3" height="6.3" rx="1" fill="#3a8ed1"/><rect x="0" y="7.7" width="6.3" height="6.3" rx="1" fill="#3a8ed1"/><rect x="7.7" y="7.7" width="6.3" height="6.3" rx="1" fill="#f28c1c"/><path d="M1.5 3.15H4.8M9.2 3.15H12.5M10.85 1.5V4.8M9.2 10.85H12.5M1.8 9.5L4.5 12.2M4.5 9.5L1.8 12.2" stroke="#fff" stroke-width="1"/></svg>
<svg style="left:1039px;top:524px" width="15" height="15"><circle cx="7.5" cy="7.5" r="6.6" fill="none" stroke="#3a8ed1" stroke-width="1.5"/><circle cx="5.5" cy="5.5" r="1" fill="#3a8ed1"/><circle cx="9.5" cy="5.5" r="1" fill="#3a8ed1"/><circle cx="5.5" cy="9.5" r="1" fill="#3a8ed1"/><circle cx="9.5" cy="9.5" r="1" fill="#3a8ed1"/></svg>
<svg style="left:1038px;top:545px" width="16" height="16"><rect x="0.5" y="0.5" width="15" height="15" rx="2.2" fill="#3a8ed1"/><path d="M3 3h2v1.6H3zM7 3h2v1.6H7zM11 3h2v1.6h-2zM4.8 5.6h2v1.6h-2zM8.8 5.6h2v1.6h-2zM2 5.6h1.2v1.6H2zM12.6 5.6h1.2v1.6h-1.2zM3 8.2h2v1.2H3zM7 8.2h2v1.2H7zM11 8.2h2v1.2h-2z" fill="#fff"/><path d="M2 13.6V10.2Q3.5 9.6 4.5 10.2Q6 10.8 8 10.2Q10 9.6 11.5 10.2Q12.5 10.8 14 10.2V13.6Z" fill="#fff"/></svg>
<svg style="left:1039px;top:567px" width="15" height="16"><rect x="0" y="4.8" width="14" height="11" rx="1" fill="#3a8ed1"/><path d="M1.2 6.2h2.6v2.2H1.2zM5 6.2h2.6v2.2H5zM8.8 6.2h2.1v2.2H8.8zM11.9 6.2h1.2v2.2h-1.2zM1.2 9.6h2.6v2.2H1.2zM5 9.6h2.6v2.2H5zM8.8 9.6h2.1v2.2H8.8zM11.9 9.6h1.2v2.2h-1.2zM1.2 13h2.6v1.6H1.2zM5 13h2.6v1.6H5zM8.8 13h2.1v1.6H8.8zM11.9 13h1.2v1.6h-1.2z" fill="#fff"/><rect x="3.3" y="4.8" width="4.1" height="11" fill="#f28c1c" opacity="0.8"/><path d="M5.3 0.3V3.8M3.6 2.1H7" stroke="#f28c1c" stroke-width="1.4"/></svg>
<svg style="left:1038px;top:589px" width="16" height="16"><path d="M14.6 8.5V0.8H0.8V14.6H8.5" fill="none" stroke="#3a8ed1" stroke-width="1.6"/><rect x="0" y="0" width="15.4" height="3" fill="#3a8ed1"/><rect x="1.6" y="3" width="7.4" height="5.8" fill="#8cc4ec"/><path d="M10 12.5H15M10 11.3V13.7M15 11.3V13.7" stroke="#3a8ed1" stroke-width="0.9"/></svg>
<svg style="left:34px;top:823px" width="14" height="15"><path d="M1.6 9.3A5.4 5.4 0 0 1 7.6 2.4" fill="none" stroke="#3a8ed1" stroke-width="2.4"/><path d="M1.6 9.3A5.4 5.4 0 0 1 7.6 2.4" fill="none" stroke="#fff" stroke-width="0.7"/><path d="M6.8 0.4L10.8 2.9L6.8 5.4Z" fill="#fff" stroke="#3a8ed1" stroke-width="1.1" stroke-linejoin="round"/><path d="M12.4 5.7A5.4 5.4 0 0 1 6.4 12.6" fill="none" stroke="#3a8ed1" stroke-width="2.4"/><path d="M12.4 5.7A5.4 5.4 0 0 1 6.4 12.6" fill="none" stroke="#fff" stroke-width="0.7"/><path d="M7.2 14.6L3.2 12.1L7.2 9.6Z" fill="#fff" stroke="#3a8ed1" stroke-width="1.1" stroke-linejoin="round"/></svg>
<div class="t" style="left:51px;top:824px;font-size:13.3px;color:#6a6a6a">Refresh</div>
<svg style="left:103px;top:830px" width="5" height="4"><path d="M0 0H5L2.5 4Z" fill="#222"/></svg>
<svg style="left:115px;top:821px" width="3" height="18"><path d="M1.5 0V18" stroke="#a99c8c" stroke-width="1.6" stroke-dasharray="2 2.5"/></svg>
<svg style="left:122px;top:823px" width="15" height="15"><circle cx="7.5" cy="7.5" r="6.5" fill="none" stroke="#a9d6a5" stroke-width="1.4"/><path d="M4 7.5L6.5 10L11 5" fill="none" stroke="#a9d6a5" stroke-width="1.4"/></svg>
<div class="t" style="left:141px;top:824px;font-size:13.3px;color:#b5b5b5">Save</div>
<svg style="left:175px;top:830px" width="5" height="4"><path d="M0 0H5L2.5 4Z" fill="#b5b5b5"/></svg>
<svg style="left:187px;top:823px" width="14" height="15"><rect x="0.7" y="1.2" width="12.3" height="12.3" fill="none" stroke="#f0aaa2" stroke-width="1.4"/><path d="M4 4.5L9.7 10.2M9.7 4.5L4 10.2" stroke="#f0aaa2" stroke-width="1.4"/></svg>
<div class="t" style="left:204px;top:824px;font-size:13.3px;color:#b5b5b5">Cancel</div>
<svg style="left:251px;top:821px" width="3" height="18"><path d="M1.5 0V18" stroke="#a99c8c" stroke-width="1.6" stroke-dasharray="2 2.5"/></svg>
<svg style="left:260px;top:824px" width="15" height="15"><path d="M0 1.6H14M0 6.6H9M0 11.3H4.6" stroke="#1e88d8" stroke-width="2.2"/><path d="M7 13.8L13.8 7.3" stroke="#1e88d8" stroke-width="2.4"/><path d="M5.7 14.6L7.4 12.6" stroke="#1e88d8" stroke-width="1.4"/></svg>
<svg style="left:282px;top:824px" width="16" height="15"><path d="M0 1.6H14M0 6.6H5.8M0 11.3H5.8" stroke="#1e88d8" stroke-width="2.2"/><path d="M7 9.3H14.8M10.9 5.5V13.4" stroke="#1aa333" stroke-width="2.3"/></svg>
<svg style="left:304px;top:824px" width="16" height="15"><path d="M0 1.6H14M0 6.6H4M0 11.3H4" stroke="#1e88d8" stroke-width="2.2"/><path d="M7 5.5Q5 9.5 7 13.5M12.8 5.5Q14.8 9.5 12.8 13.5" fill="none" stroke="#1e88d8" stroke-width="1.2"/><path d="M7.5 9.5H12.3M9.9 7.1V11.9" stroke="#1aa333" stroke-width="1.8"/></svg>
<svg style="left:326px;top:824px" width="16" height="15"><path d="M0 1.6H14M0 6.6H6M0 11.3H6" stroke="#1e88d8" stroke-width="2.2"/><path d="M7 9.3H15.2" stroke="#e03a2c" stroke-width="2.4"/></svg>
<svg style="left:348px;top:821px" width="3" height="18"><path d="M1.5 0V18" stroke="#a99c8c" stroke-width="1.6" stroke-dasharray="2 2.5"/></svg>
<svg style="left:358px;top:824px" width="11" height="14"><path d="M1.2 0.5V13.5" stroke="#9ccbed" stroke-width="2"/><path d="M10 0.8L4.2 7L10 13.2" fill="none" stroke="#9ccbed" stroke-width="2"/></svg>
<svg style="left:381px;top:825px" width="8" height="13"><path d="M7 0.8L1.6 6.5L7 12.2" fill="none" stroke="#9ccbed" stroke-width="2"/></svg>
<svg style="left:403px;top:825px" width="8" height="13"><path d="M1 0.8L6.4 6.5L1 12.2" fill="none" stroke="#1e88d8" stroke-width="2.2"/></svg>
<svg style="left:423px;top:824px" width="11" height="14"><path d="M1 0.8L6.8 7L1 13.2" fill="none" stroke="#1e88d8" stroke-width="2.2"/><path d="M9.8 0.5V13.5" stroke="#1e88d8" stroke-width="2.2"/></svg>
<svg style="left:443px;top:823px" width="16" height="16"><path d="M0.8 4.5V0.8H4.5M11.5 0.8H15.2V4.5M15.2 11.5V15.2H11.5M4.5 15.2H0.8V11.5" fill="none" stroke="#9ccbed" stroke-width="1.4"/><rect x="5" y="4.5" width="6" height="7" fill="#bcdcf6" stroke="#9ccbed" stroke-width="1"/></svg>
<svg style="left:469px;top:821px" width="3" height="18"><path d="M1.5 0V18" stroke="#a99c8c" stroke-width="1.6" stroke-dasharray="2 2.5"/></svg>
<svg style="left:477px;top:823px" width="14" height="15"><path d="M3.4 4.7H10.1L6.75 1Z" fill="#1e88d8"/><path d="M6.75 4V10.9" stroke="#1e88d8" stroke-width="2.9"/><path d="M1.4 10.4V13.6H12.4V10.4" fill="none" stroke="#1e88d8" stroke-width="1.9"/></svg>
<div class="t" style="left:494px;top:824px;font-size:13.3px;color:#6a6a6a;letter-spacing:0.2px">Export data</div>
<svg style="left:569px;top:830px" width="5" height="4"><path d="M0 0H5L2.5 4Z" fill="#222"/></svg>
<svg style="left:582px;top:821px" width="3" height="18"><path d="M1.5 0V18" stroke="#a99c8c" stroke-width="1.6" stroke-dasharray="2 2.5"/></svg>
<svg style="left:588px;top:823px" width="16" height="16" viewBox="0 0 16 16"><path d="M6.6 0.5h2.8l0.5 2.2 1.6 0.9 2.1-0.7 1.4 2.4-1.6 1.5v1.8l1.6 1.5-1.4 2.4-2.1-0.7-1.6 0.9-0.5 2.2H6.6l-0.5-2.2-1.6-0.9-2.1 0.7-1.4-2.4 1.6-1.5V6.3L1 4.8l1.4-2.4 2.1 0.7 1.6-0.9Z" fill="#3a8ed1"/><circle cx="8" cy="8" r="2.6" fill="#8cc4ec"/></svg>
<div class="a" style="left:611px;top:821px;width:67px;height:20px;background:#fff;border:1px solid #e2e2e2;border-top-color:#f0f0f0"></div>
<div class="t" style="left:614px;top:824px;font-size:13.3px;letter-spacing:0.2px">200</div>
<svg style="left:685px;top:823px" width="16" height="15"><path d="M0.4 1.8H3Q7.2 1.8 8.2 5.5V7.8M16 1.8H13.4Q9.2 1.8 8.2 5.5" fill="none" stroke="#1e88d8" stroke-width="1.8"/><path d="M6 6.4L8.2 8.8L10.4 6.4Z" fill="#1e88d8"/><path d="M1.4 10.4V13.6H14.8V10.4" fill="none" stroke="#1e88d8" stroke-width="1.9"/></svg>
<div class="t" style="left:707px;top:824px;font-size:13.3px;letter-spacing:0.2px">26</div>
<svg style="left:729px;top:821px" width="3" height="18"><path d="M1.5 0V18" stroke="#a99c8c" stroke-width="1.6" stroke-dasharray="2 2.5"/></svg>
<!-- ===== main frame border ===== -->
<div class="a" style="left:1059px;top:2px;width:1px;height:844px;background:#b0b0b0;z-index:49"></div>
<div class="a" style="left:2px;top:2px;width:1px;height:844px;background:#d6d6d6;z-index:49"></div>
<div class="a" style="left:0;top:0;width:1062px;height:848px;border-style:solid;border-color:#7f685c;border-width:2px;z-index:50"></div>
</body></html>
